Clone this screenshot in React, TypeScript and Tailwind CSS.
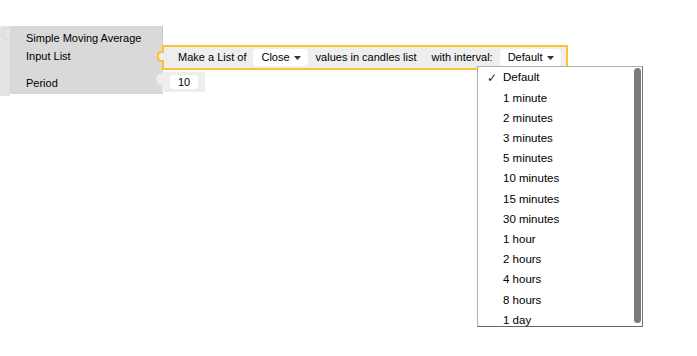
import React from "react";

const intervals = [
  "Default",
  "1 minute",
  "2 minutes",
  "3 minutes",
  "5 minutes",
  "10 minutes",
  "15 minutes",
  "30 minutes",
  "1 hour",
  "2 hours",
  "4 hours",
  "8 hours",
  "1 day",
];

function Caret() {
  return (
    <svg width="7" height="4" viewBox="0 0 7 4" className="ml-[4px] mt-[1px]">
      <path d="M0 0 L7 0 L3.5 4 Z" fill="#333" />
    </svg>
  );
}

function Pill({ label }: { label: string }) {
  return (
    <div className="flex h-[17px] items-center rounded-[4px] bg-white pl-[8px] pr-[7px]">
      <span>{label}</span>
      <Caret />
    </div>
  );
}

export default function App() {
  return (
    <div
      className="relative h-[356px] w-[697px] overflow-hidden bg-white text-[11px] text-black"
      style={{ fontFamily: '"Liberation Sans", Arial, sans-serif' }}
    >
      <div className="flex items-start pt-[26px]">
        {/* left strip */}
        <div className="relative h-[70px] w-[10px] bg-[#e3e3e3]">
          <div className="absolute left-[4px] top-[2px] h-[12px] w-[6px] rounded-l-[2px] border border-r-0 border-[#d8d8d8] bg-[#e6e6e6]" />
        </div>

        {/* main block body */}
        <div className="flex h-[68px] w-[153px] flex-col border-r border-[#c9c9c9] bg-[#d9d9d9] pl-[16px]">
          <div className="mt-[3px] flex h-[18px] items-center">Simple Moving Average</div>
          <div className="flex h-[18px] items-center">Input List</div>
          <div className="mt-[9px] flex h-[18px] items-center">Period</div>
        </div>

        {/* inputs */}
        <div className="ml-[-1px] flex flex-col">
          <div className="relative mt-[19px] flex h-[25px] w-[406px] items-center border-2 border-[#fcc232] bg-[#eeeeee] pl-[14px]">
            <div className="absolute left-[-7px] top-[4px] h-[11px] w-[7px] rounded-l-[4px] border-2 border-r-0 border-[#fcc232] bg-[#eeeeee]" />
            <span>Make a List of</span>
            <div className="ml-[7px]">
              <Pill label="Close" />
            </div>
            <span className="ml-[8px]">values in candles list</span>
            <span className="ml-[15px]">with interval:</span>
            <div className="ml-[7px]">
              <Pill label="Default" />
            </div>
          </div>

          <div className="relative mt-[2px] flex h-[20px] w-[43px] items-center bg-[#eeeeee] pl-[8px]">
            <div className="absolute left-[-6px] top-[1px] h-[12px] w-[6px] rounded-l-full bg-[#eeeeee]" />
            <div className="flex h-[14px] w-[28px] items-center rounded-[3px] bg-white pl-[8px]">10</div>
          </div>
        </div>
      </div>

      {/* dropdown menu */}
      <div className="absolute left-[477px] top-[66px] h-[261px] w-[166px] overflow-hidden border border-[#b0b0b0] border-b-[#666] border-r-[#777] bg-white text-[11.5px]">
        <div className="flex flex-col pt-[1px]">
          {intervals.map((item, i) => (
            <div key={item} className="relative flex h-[20.2px] shrink-0 items-center pl-[25px]">
              {i === 0 ? (
                <span
                  className="absolute left-[9px] text-[12px] text-[#222]"
                  style={{ fontFamily: '"DejaVu Sans", sans-serif' }}
                >
                  ✓
                </span>
              ) : null}
              {item}
            </div>
          ))}
        </div>
        <div className="absolute right-[1px] top-[1px] h-[255px] w-[7px] rounded-full bg-[#7a7a7a]" />
      </div>
    </div>
  );
}
